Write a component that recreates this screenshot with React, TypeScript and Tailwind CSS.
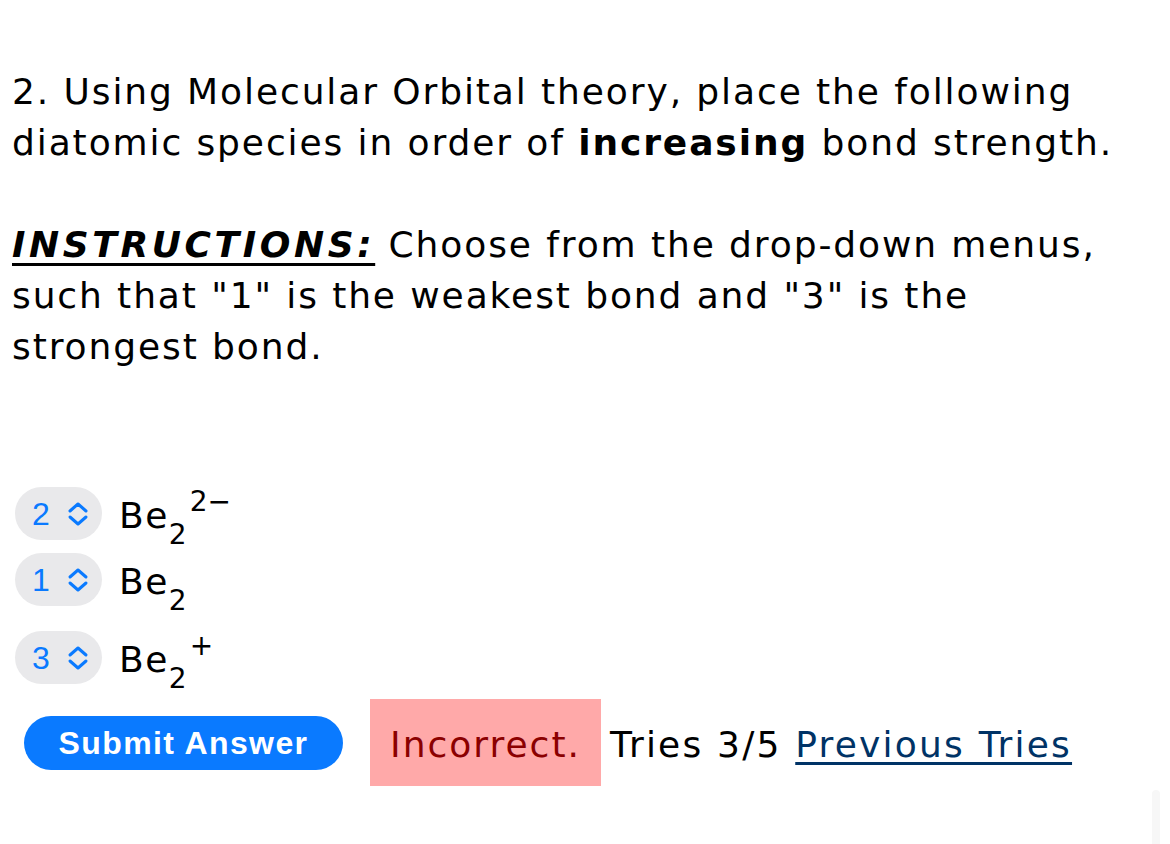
import React from 'react';

const Chevrons: React.FC = () => (
    <svg width="22" height="24" viewBox="0 0 22 24" fill="none" stroke="#0a7aff" strokeWidth="3" strokeLinecap="round" strokeLinejoin="round">
        <path d="M3 9 L11 2 L19 9" />
        <path d="M3 15 L11 22 L19 15" />
    </svg>
);

const Picker: React.FC<{ value: string }> = ({ value }) => (
    <div className="flex items-center justify-between w-[87px] h-[53px] rounded-full bg-[#e9e9eb] pl-[17px] pr-[13px] shrink-0">
        <span className="text-[32px] text-[#0a7aff] leading-none" style={{ fontFamily: '"Liberation Sans", Arial, sans-serif' }}>{value}</span>
        <Chevrons />
    </div>
);

const Species: React.FC<{ charge?: string }> = ({ charge }) => (
    <span className="ml-[17px] text-[36px] tracking-[1.5px] text-black leading-none whitespace-nowrap relative top-[2px]">
        Be
        <span className="relative top-[16px] text-[28px] tracking-normal">2</span>
        {charge && <span className="relative top-[-17px] ml-[3px] text-[28px] tracking-normal">{charge}</span>}
    </span>
);

export default function App() {
    return (
        <div className="min-h-[844px] bg-white relative" style={{ fontFamily: '"DejaVu Sans", Verdana, sans-serif' }}>
            <div className="pl-[12px] pr-[20px] pt-[66px] text-[36px] leading-[51px] tracking-[1.9px] text-black">
                <p>
                    2. Using Molecular Orbital theory, place the following diatomic species in order of <b>increasing</b> bond strength.
                </p>
                <p className="mt-[51px]">
                    <b><i><u className="underline-offset-[6px] tracking-[3.6px]">INSTRUCTIONS:</u></i></b> Choose from the drop-down menus, such that "1" is the weakest bond and "3" is the strongest bond.
                </p>
            </div>

            <div className="pl-[15px] mt-[115px] flex flex-col">
                <div className="flex items-center">
                    <Picker value="2" />
                    <Species charge="2−" />
                </div>
                <div className="flex items-center mt-[13px]">
                    <Picker value="1" />
                    <Species />
                </div>
                <div className="flex items-center mt-[25px]">
                    <Picker value="3" />
                    <Species charge="+" />
                </div>
            </div>

            <div className="flex items-center pl-[24px] mt-[15px]">
                <button
                    className="w-[319px] h-[54px] rounded-full bg-[#0a7aff] text-white text-[32px] tracking-[1.4px] font-bold"
                    style={{ fontFamily: '"Liberation Sans", Arial, sans-serif' }}
                >
                    Submit Answer
                </button>
                <div className="ml-[27px] h-[87px] w-[231px] bg-[#ffa9a9] flex items-center justify-center text-[36px] tracking-[2px] text-[#8b0000] pt-[4px]">
                    Incorrect.
                </div>
                <div className="ml-[9px] text-[36px] tracking-[2.2px] text-black pt-[4px]">
                    Tries 3/5{' '}
                    <a href="#" className="text-[#003366] underline underline-offset-[5px]">Previous Tries</a>
                </div>
            </div>

            <div className="absolute right-[10px] bottom-0 w-[8px] h-[54px] rounded-t-full bg-[#f7f7f7]" />
        </div>
    );
}
